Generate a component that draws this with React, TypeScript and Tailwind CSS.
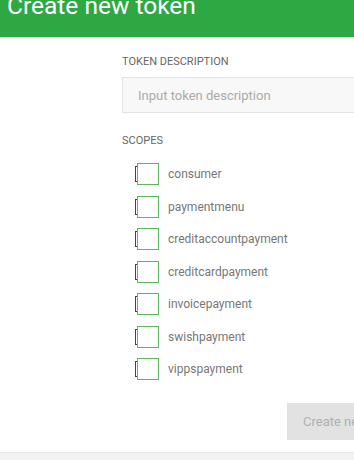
const scopes = [
  'consumer',
  'paymentmenu',
  'creditaccountpayment',
  'creditcardpayment',
  'invoicepayment',
  'swishpayment',
  'vippspayment',
];

function ScopeCheckbox({ label }: { label: string }) {
  return (
    <label className="flex h-[22px] items-center">
      <span className="relative ml-[15px] h-[22px] w-[22px] shrink-0">
        <span className="absolute left-[-2px] top-[3px] h-[16px] w-[4px] border-y border-l border-[#444]" />
        <span className="absolute inset-0 border border-[#5cb85c] bg-white" />
      </span>
      <span className="ml-[9px] text-[12px] text-[#777]">{label}</span>
    </label>
  );
}

export default function App() {
  return (
    <div className="h-[460px] w-[354px] overflow-hidden bg-white font-['Roboto',sans-serif]">
      <header className="h-[37px] overflow-hidden bg-[#2ea843]">
        <h1 className="mt-[-6px] whitespace-nowrap pl-[7px] text-[24.5px] leading-[24.5px] text-white">
          Create new token
        </h1>
      </header>

      <div className="pl-[122px]">
        <div className="pt-[18px] text-[11px] uppercase leading-[13px] text-[#666]">Token description</div>
        <input
          placeholder="Input token description"
          className="mt-[9px] block h-[36px] w-[300px] border border-[#e3e3e3] bg-[#f8f8f8] px-[15px] text-[13px] text-[#555] outline-none placeholder:text-[#aaa]"
        />

        <div className="pt-[21px] text-[11px] uppercase leading-[13px] text-[#666]">Scopes</div>
        <div className="mt-[16px] flex flex-col gap-[10.5px]">
          {scopes.map((s) => (
            <ScopeCheckbox key={s} label={s} />
          ))}
        </div>
      </div>

      <div className="mt-[23px] flex pl-[287px]">
        <button
          type="button"
          disabled
          className="h-[37px] w-[140px] shrink-0 whitespace-nowrap bg-[#e2e2e2] pl-[16px] text-left text-[13px] text-[#b0b0b0]"
        >
          Create new token
        </button>
      </div>

      <div className="mt-[12px] h-[10px] border-t border-[#e8e8e8] bg-[#f2f2f2]" />
    </div>
  );
}
